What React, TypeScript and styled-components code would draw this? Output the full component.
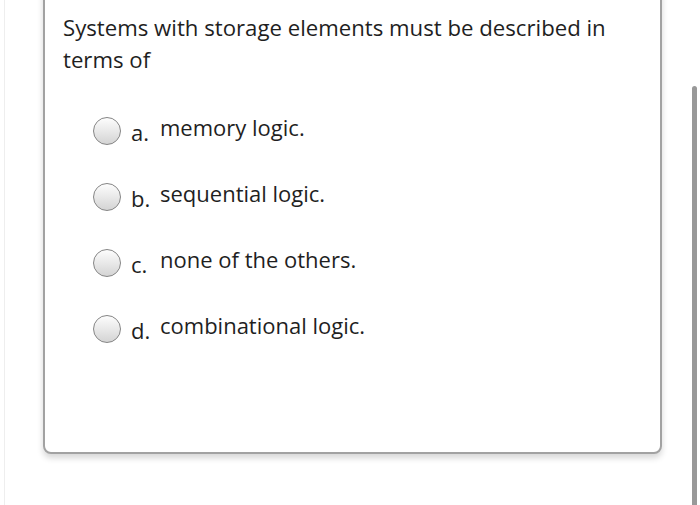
import React from "react";
import styled, { createGlobalStyle } from "styled-components";

const GlobalStyle = createGlobalStyle`
  html, body {
    margin: 0;
    padding: 0;
    background: #ffffff;
    overflow: hidden;
  }
  body {
    font-family: "Open Sans", "Noto Sans", sans-serif;
    color: #222;
  }
`;

const Page = styled.div`
  position: relative;
  display: flow-root;
  height: 505px;
  margin-left: 4px;
  border-left: 1px solid #eeeeee;
  background: #fff;
`;

const Card = styled.div`
  margin-left: 38px;
  margin-top: -20px;
  width: 619px;
  padding: 30px 0 0 18px;
  height: 474px;
  box-sizing: border-box;
  border: 2px solid #a2a2a2;
  border-radius: 8px;
  background: #fff;
  box-shadow: 0 4px 6px rgba(0, 0, 0, 0.16);
`;

const Question = styled.div`
  font-size: 22.2px;
  line-height: 32px;
  color: #1f1f1f;
`;

const Options = styled.div`
  display: flex;
  flex-direction: column;
  margin-top: 22px;
  padding-left: 30px;
`;

const Row = styled.label`
  display: flex;
  align-items: center;
  height: 66px;
`;

const Radio = styled.span`
  flex: none;
  width: 26px;
  height: 26px;
  border-radius: 50%;
  border: 1.5px solid #858585;
  background: linear-gradient(#fdfdfd, #d4d4d4);
`;

const Letter = styled.span`
  flex: none;
  width: 29px;
  margin-left: 10px;
  margin-top: 1px;
  font-size: 22px;
  line-height: 28px;
  color: #1f1f1f;
`;

const Answer = styled.span`
  font-size: 22px;
  line-height: 28px;
  margin-bottom: 9px;
  color: #1f1f1f;
`;

const Scrollbar = styled.div`
  position: absolute;
  right: 3px;
  top: 86px;
  bottom: -10px;
  width: 5px;
  border-radius: 3px;
  background: #999999;
`;

const options = [
  { key: "a.", text: "memory logic." },
  { key: "b.", text: "sequential logic." },
  { key: "c.", text: "none of the others." },
  { key: "d.", text: "combinational logic." },
];

export default function App() {
  return (
    <>
      <GlobalStyle />
      <Page>
        <Card>
          <Question>
            Systems with storage elements must be described in terms of
          </Question>
          <Options>
            {options.map((o) => (
              <Row key={o.key}>
                <Radio />
                <Letter>{o.key}</Letter>
                <Answer>{o.text}</Answer>
              </Row>
            ))}
          </Options>
        </Card>
        <Scrollbar />
      </Page>
    </>
  );
}
